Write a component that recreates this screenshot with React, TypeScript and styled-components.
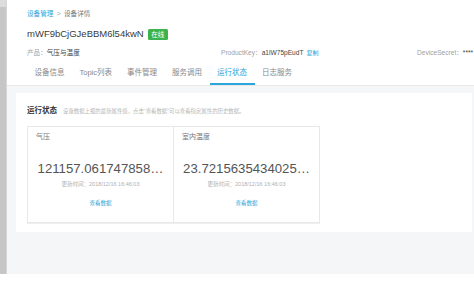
import React from "react";
import styled, { createGlobalStyle } from "styled-components";

const Global = createGlobalStyle`
  html, body { margin: 0; padding: 0; background: #fff; }
  body { font-family: "Liberation Sans", Arial, "Noto Sans CJK SC", sans-serif; color: #333; }
  * { box-sizing: border-box; }
`;

const Frame = styled.div`
  width: 474px;
  height: 284px;
  display: flex;
  flex-direction: column;
  overflow: hidden;
  background: #fff;
`;

const Top = styled.div`
  height: 274px;
  display: flex;
`;

const SideBar = styled.div`
  width: 7px;
  flex: none;
  background: linear-gradient(#dcdcdc 0 7px, #c6c6c6 7px);
  border-right: 1px solid #d6d6d6;
`;

const Main = styled.div`
  flex: 1;
  min-width: 0;
  background: #f5f6f8;
  display: flex;
  flex-direction: column;
`;

const Header = styled.div`
  background: #fff;
  padding: 9px 0 0 20px;
  border-bottom: 1px solid #e8e8e8;
`;

const Crumbs = styled.div`
  display: flex;
  align-items: center;
  font-size: 6.6px;
  line-height: 10px;
  color: #777;
`;

const CrumbLink = styled.span`
  color: #2aa6dc;
`;

const CrumbSep = styled.span`
  margin: 0 3.4px;
  color: #aaa;
`;

const TitleRow = styled.div`
  margin-top: 9px;
  height: 12px;
  display: flex;
  align-items: center;
  gap: 4px;
`;

const Title = styled.span`
  font-size: 9.5px;
  line-height: 12px;
  color: #3a3a3a;
`;

const Badge = styled.span`
  height: 11px;
  padding: 0 3.5px;
  background: #3bb34c;
  color: #fff;
  font-size: 6.5px;
  line-height: 11px;
  border-radius: 1.5px;
`;

const InfoRow = styled.div`
  margin-top: 8px;
  display: grid;
  grid-template-columns: 194px 196px 1fr;
  font-size: 6.6px;
  line-height: 10px;
  white-space: nowrap;
  overflow: hidden;
`;

const InfoItem = styled.div`
  color: #a0a0a0;
  overflow: hidden;
`;

const InfoValue = styled.span`
  color: #444;
`;

const CopyLink = styled.span`
  color: #2aa6dc;
  margin-left: 3px;
  font-size: 6px;
`;

const Tabs = styled.div`
  margin-top: 4px;
  display: flex;
`;

const Tab = styled.div<{ $active?: boolean }>`
  padding: 0 7.5px;
  height: 23px;
  line-height: 21px;
  font-size: 7.5px;
  color: ${(p) => (p.$active ? "#2aa6dc" : "#888")};
  border-bottom: 2px solid ${(p) => (p.$active ? "#2aa6dc" : "transparent")};
  white-space: nowrap;
`;

const Body = styled.div`
  padding: 7px 2px 0 9px;
`;

const Panel = styled.div`
  background: #fff;
  height: 139px;
  padding: 13px 11px 0 11px;
`;

const PanelHead = styled.div`
  display: flex;
  align-items: baseline;
  gap: 6px;
  line-height: 10px;
  white-space: nowrap;
`;

const PanelTitle = styled.span`
  font-size: 7.5px;
  font-weight: bold;
  color: #333;
`;

const PanelDesc = styled.span`
  font-size: 5.4px;
  color: #b5b5b5;
`;

const Cards = styled.div`
  margin-top: 10px;
  width: 293px;
  display: grid;
  grid-template-columns: 1fr 1fr;
  border-left: 1px solid #e8e8e8;
  border-top: 1px solid #e8e8e8;
  box-shadow: 0 1px 0 #efefef;
`;

const Card = styled.div`
  height: 96px;
  border-right: 1px solid #e8e8e8;
  border-bottom: 1px solid #e8e8e8;
  padding: 5px 8px 0 8px;
  display: flex;
  flex-direction: column;
  min-width: 0;
`;

const CardLabel = styled.div`
  font-size: 7px;
  line-height: 10px;
  color: #777;
`;

const CardValue = styled.div`
  margin-top: 19px;
  font-size: 13.2px;
  line-height: 16px;
  color: #555;
  text-align: center;
  white-space: nowrap;
`;

const CardTime = styled.div`
  margin-top: 3px;
  font-size: 5.5px;
  line-height: 8px;
  color: #b0b0b0;
  text-align: center;
  white-space: nowrap;
`;

const CardLink = styled.div`
  margin-top: 11px;
  font-size: 5.5px;
  line-height: 8px;
  color: #2aa6dc;
  text-align: center;
`;

const cards = [
  { label: "气压", value: "121157.061747858…", time: "2018/12/16 16:46:03" },
  { label: "室内温度", value: "23.7215635434025…", time: "2018/12/16 16:46:03" },
];

const tabs = ["设备信息", "Topic列表", "事件管理", "服务调用", "运行状态", "日志服务"];

export default function App() {
  return (
    <Frame>
      <Global />
      <Top>
        <SideBar />
        <Main>
          <Header>
            <Crumbs>
              <CrumbLink>设备管理</CrumbLink>
              <CrumbSep>&gt;</CrumbSep>
              <span>设备详情</span>
            </Crumbs>
            <TitleRow>
              <Title>mWF9bCjGJeBBM6l54kwN</Title>
              <Badge>在线</Badge>
            </TitleRow>
            <InfoRow>
              <InfoItem>
                产品：<InfoValue>气压与温度</InfoValue>
              </InfoItem>
              <InfoItem>
                ProductKey：<InfoValue>a1lW75pEudT</InfoValue>
                <CopyLink>复制</CopyLink>
              </InfoItem>
              <InfoItem>
                DeviceSecret：<InfoValue>****</InfoValue>
              </InfoItem>
            </InfoRow>
            <Tabs>
              {tabs.map((t) => (
                <Tab key={t} $active={t === "运行状态"}>
                  {t}
                </Tab>
              ))}
            </Tabs>
          </Header>
          <Body>
            <Panel>
              <PanelHead>
                <PanelTitle>运行状态</PanelTitle>
                <PanelDesc>设备数据上报的最新属性值，点击“查看数据”可以查看指定属性的历史数据。</PanelDesc>
              </PanelHead>
              <Cards>
                {cards.map((c) => (
                  <Card key={c.label}>
                    <CardLabel>{c.label}</CardLabel>
                    <CardValue>{c.value}</CardValue>
                    <CardTime>更新时间：{c.time}</CardTime>
                    <CardLink>查看数据</CardLink>
                  </Card>
                ))}
              </Cards>
            </Panel>
          </Body>
        </Main>
      </Top>
    </Frame>
  );
}
